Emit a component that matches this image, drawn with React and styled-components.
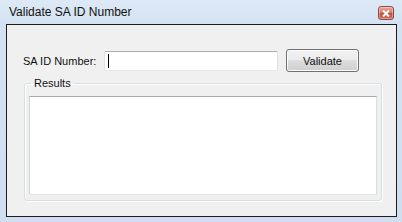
import React from 'react'
import styled, { createGlobalStyle } from 'styled-components'

const GlobalStyle = createGlobalStyle`
  html, body {
    margin: 0;
    padding: 0;
    background: #d4e3f3;
  }
  * {
    box-sizing: border-box;
  }
`

const Window = styled.div`
  width: 402px;
  height: 222px;
  display: flex;
  flex-direction: column;
  background: linear-gradient(to bottom, #dde9f6 0px, #d3e2f3 24px, #cfdff1 100%);
  font-family: 'Liberation Sans', Arial, sans-serif;
  font-size: 11px;
  color: #1a1a1a;
  overflow: hidden;
`

const TitleBar = styled.div`
  height: 24px;
  flex: 0 0 24px;
  display: flex;
  align-items: center;
  justify-content: space-between;
  padding: 0 8px 0 9px;
`

const Title = styled.span`
  font-size: 12px;
  color: #111;
  line-height: 1;
  margin-top: -1px;
`

const CloseButton = styled.div`
  width: 16px;
  height: 14px;
  margin-top: 2px;
  border: 1px solid #8e4a42;
  border-radius: 3px;
  background: linear-gradient(to bottom, #e8a89c 0%, #d77b6d 45%, #c2503f 55%, #cf6c5a 100%);
  box-shadow: inset 0 0 0 1px rgba(255, 255, 255, 0.35);
  display: flex;
  align-items: center;
  justify-content: center;
`

const Client = styled.div`
  flex: 0 0 193px;
  margin: 0 5px 0 6px;
  border: 1px solid #1c1c1c;
  background: #f0f0f0;
  display: flex;
  flex-direction: column;
  padding: 24px 0 0 16px;
`

const Row = styled.div`
  display: flex;
  align-items: center;
  height: 23px;
`

const Label = styled.label`
  width: 81px;
  white-space: nowrap;
  font-size: 11px;
  color: #111;
`

const TextBox = styled.div`
  width: 174px;
  height: 20px;
  background: #fff;
  border: 1px solid;
  border-color: #abadb3 #dbdfe6 #e3e9ef #e2e3ea;
  border-radius: 2px;
  display: flex;
  align-items: center;
  padding-left: 3px;
`

const Caret = styled.span`
  width: 1px;
  height: 14px;
  background: #000;
`

const Button = styled.button`
  margin-left: 8px;
  width: 73px;
  height: 23px;
  padding: 0;
  border: 1px solid #707070;
  border-radius: 3px;
  background: linear-gradient(to bottom, #f2f2f2 0%, #ebebeb 50%, #dddddd 50%, #cfcfcf 100%);
  box-shadow: inset 0 0 0 1px #fcfcfc;
  font-family: inherit;
  font-size: 11px;
  color: #111;
`

const Group = styled.fieldset`
  margin: 4px 0 0 1px;
  width: 358px;
  padding: 5px 4px 5px 4px;
  border: 1px solid #d5dfe5;
  border-radius: 3px;
  box-shadow: inset 1px 1px 0 #fff, 1px 1px 0 #fff;
`

const Legend = styled.legend`
  margin-left: 2px;
  padding: 0 3px;
  font-size: 11px;
  line-height: 15px;
  color: #111;
`

const Output = styled.div`
  width: 348px;
  height: 99px;
  background: #fff;
  border: 1px solid;
  border-color: #a9a9a9 #dcdcdc #e3e3e3 #d6d6d6;
`

const CloseIcon = () => (
  <svg width="8" height="7" viewBox="0 0 8 7">
    <path d="M1 0.5 L7 6.5 M7 0.5 L1 6.5" stroke="#fff" strokeWidth="2" />
  </svg>
)

const App = () => {
  return (
    <>
      <GlobalStyle />
      <Window>
        <TitleBar>
          <Title>Validate SA ID Number</Title>
          <CloseButton>
            <CloseIcon />
          </CloseButton>
        </TitleBar>
        <Client>
          <Row>
            <Label>SA ID Number:</Label>
            <TextBox>
              <Caret />
            </TextBox>
            <Button>Validate</Button>
          </Row>
          <Group>
            <Legend>Results</Legend>
            <Output />
          </Group>
        </Client>
      </Window>
    </>
  )
}

export default App
